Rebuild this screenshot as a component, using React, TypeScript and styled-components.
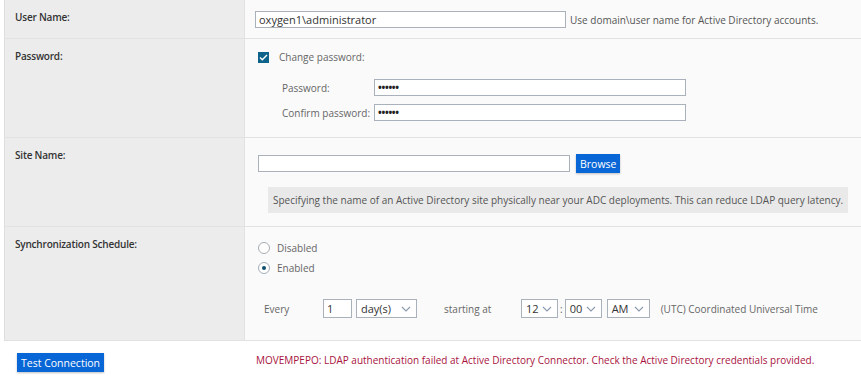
import React from "react";
import styled, { createGlobalStyle } from "styled-components";

const GlobalStyle = createGlobalStyle`
  html, body {
    margin: 0;
    padding: 0;
    background: #ffffff;
  }
  body {
    font-family: "Open Sans", "Liberation Sans", sans-serif;
    font-size: 10px;
    color: #555;
    white-space: nowrap;
  }
`;

const Chevron = () => (
  <svg width="10" height="6" viewBox="0 0 10 6" fill="none">
    <path d="M1 1l4 4 4-4" stroke="#8a99ad" strokeWidth="1.1" />
  </svg>
);

const Form = styled.div`
  margin-left: 4px;
  border-left: 1px solid #dedede;
`;

const Row = styled.div`
  display: grid;
  grid-template-columns: 240px 1fr;
  border-bottom: 1px solid #e2e2e2;
`;

const Label = styled.div`
  background: #ececec;
  border-right: 1px solid #e2e2e2;
  padding: 9px 0 0 10px;
  line-height: 16px;
  font-weight: 600;
  letter-spacing: -0.2px;
  color: #333;
`;

const Cell = styled.div<{ $pad: string }>`
  background: #fafafa;
  padding: ${(p) => p.$pad};
  display: flex;
  flex-direction: column;
`;

const Inline = styled.div<{ $gap?: number }>`
  display: flex;
  align-items: center;
  gap: ${(p) => p.$gap ?? 0}px;
`;

const TextInput = styled.div<{ $w: number; $h?: number }>`
  box-sizing: border-box;
  width: ${(p) => p.$w}px;
  height: ${(p) => p.$h ?? 17}px;
  border: 1px solid #a9b1ba;
  background: #fff;
  padding-left: 3px;
  font-size: 11px;
  line-height: 15px;
  color: #333;
  display: flex;
  align-items: center;
`;

const Dots = styled.span`
  font-size: 10px;
  font-weight: 700;
  letter-spacing: -0.3px;
  color: #222;
`;

const Hint = styled.span`
  color: #555;
  margin-left: 4px;
`;

const Check = styled.span`
  width: 11px;
  height: 11px;
  background: #0d6389;
  display: inline-flex;
  align-items: center;
  justify-content: center;
`;

const CheckText = styled.span`
  color: #666;
  line-height: 16px;
`;

const SubRow = styled.div<{ $top: number }>`
  display: flex;
  align-items: center;
  margin: ${(p) => p.$top}px 0 0 24px;
`;

const SubLabel = styled.span`
  width: 92px;
  color: #666;
`;

const Button = styled.button`
  border: none;
  background: #0966d6;
  color: #fff;
  font-family: "Open Sans", "Liberation Sans", sans-serif;
  font-size: 10.5px;
  height: 19px;
  padding: 0 4px;
  white-space: nowrap;
  box-shadow: 0 1px 2px rgba(0, 0, 0, 0.25);
  cursor: pointer;
`;

const InfoBox = styled.div`
  background: #e9e9e9;
  margin: 14px 13px 0 10px;
  height: 26px;
  display: flex;
  align-items: center;
  padding-left: 5px;
  color: #555;
`;

const Radio = styled.span<{ $on?: boolean }>`
  box-sizing: border-box;
  width: 12px;
  height: 12px;
  border-radius: 50%;
  border: 1px solid #a5adb5;
  background: #fff;
  display: inline-flex;
  align-items: center;
  justify-content: center;
  &::after {
    content: "";
    width: 4px;
    height: 4px;
    border-radius: 50%;
    background: ${(p) => (p.$on ? "#0d4f70" : "transparent")};
  }
`;

const RadioText = styled.span`
  color: #666;
  line-height: 20px;
`;

const Schedule = styled.div`
  display: flex;
  align-items: center;
  margin: 21px 0 0 6px;
`;

const Select = styled.div<{ $w: number; $ml?: number }>`
  box-sizing: border-box;
  width: ${(p) => p.$w}px;
  margin-left: ${(p) => p.$ml ?? 0}px;
  height: 19px;
  border: 1px solid #a9b1ba;
  background: #fff;
  display: flex;
  align-items: center;
  justify-content: space-between;
  padding: 0 5px 0 4px;
  font-size: 11px;
  color: #333;
`;

const Muted = styled.span<{ $w?: number; $ml?: number; $mr?: number }>`
  color: #666;
  width: ${(p) => (p.$w ? `${p.$w}px` : "auto")};
  margin-left: ${(p) => p.$ml ?? 0}px;
  margin-right: ${(p) => p.$mr ?? 0}px;
`;

const Footer = styled.div`
  display: flex;
  align-items: flex-start;
  padding: 12px 0 0 17px;
  height: 27px;
`;

const ErrorText = styled.span`
  color: #a8133d;
  margin-left: 152px;
  line-height: 14px;
`;

export default function App() {
  return (
    <>
      <GlobalStyle />
      <Form>
        <Row>
          <Label>User Name:</Label>
          <Cell $pad="11px 0 10px 10px">
            <Inline>
              <TextInput $w={311}>oxygen1\administrator</TextInput>
              <Hint>Use domain\user name for Active Directory accounts.</Hint>
            </Inline>
          </Cell>
        </Row>
        <Row>
          <Label>Password:</Label>
          <Cell $pad="10px 0 16px 13px">
            <Inline $gap={10}>
              <Check>
                <svg width="9" height="7" viewBox="0 0 9 7" fill="none">
                  <path d="M1 3.5l2.3 2.2L8 1" stroke="#fff" strokeWidth="1.4" />
                </svg>
              </Check>
              <CheckText>Change password:</CheckText>
            </Inline>
            <SubRow $top={14}>
              <SubLabel>Password:</SubLabel>
              <TextInput $w={312}>
                <Dots>••••••</Dots>
              </TextInput>
            </SubRow>
            <SubRow $top={8}>
              <SubLabel>Confirm password:</SubLabel>
              <TextInput $w={312}>
                <Dots>••••••</Dots>
              </TextInput>
            </SubRow>
          </Cell>
        </Row>
        <Row>
          <Label>Site Name:</Label>
          <Cell $pad="16px 0 13px 13px">
            <Inline $gap={6}>
              <TextInput $w={312} />
              <Button>Browse</Button>
            </Inline>
            <InfoBox>
              Specifying the name of an Active Directory site physically near your ADC deployments. This can
              reduce LDAP query latency.
            </InfoBox>
          </Cell>
        </Row>
        <Row>
          <Label>Synchronization Schedule:</Label>
          <Cell $pad="11px 0 22px 13px">
            <Inline $gap={7}>
              <Radio />
              <RadioText>Disabled</RadioText>
            </Inline>
            <Inline $gap={7}>
              <Radio $on />
              <RadioText>Enabled</RadioText>
            </Inline>
            <Schedule>
              <Muted $w={59}>Every</Muted>
              <TextInput $w={29} $h={19}>
                1
              </TextInput>
              <Select $w={61} $ml={4}>
                day(s) <Chevron />
              </Select>
              <Muted $w={77} $ml={27}>
                starting at
              </Muted>
              <Select $w={37}>
                12 <Chevron />
              </Select>
              <Muted $ml={2} $mr={2}>
                :
              </Muted>
              <Select $w={37}>
                00 <Chevron />
              </Select>
              <Select $w={43} $ml={5}>
                AM <Chevron />
              </Select>
              <Muted $ml={11}>(UTC) Coordinated Universal Time</Muted>
            </Schedule>
          </Cell>
        </Row>
      </Form>
      <Footer>
        <Button>Test Connection</Button>
        <ErrorText>
          MOVEMPEPO: LDAP authentication failed at Active Directory Connector. Check the Active Directory
          credentials provided.
        </ErrorText>
      </Footer>
    </>
  );
}
